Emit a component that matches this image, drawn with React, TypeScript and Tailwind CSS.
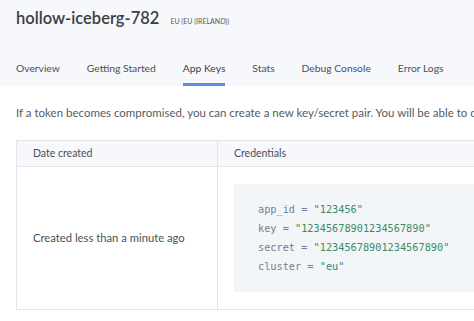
const tabs = ["Overview", "Getting Started", "App Keys", "Stats", "Debug Console", "Error Logs"]

const creds = [
  { name: "app_id", value: "123456" },
  { name: "key", value: "12345678901234567890" },
  { name: "secret", value: "12345678901234567890" },
  { name: "cluster", value: "eu" },
]

export default function App() {
  return (
    <div className="h-[321px] w-[474px] overflow-hidden bg-white font-['Lato',sans-serif] text-[#4a4f57]">
      <header className="bg-[#f6f8fb] px-4 pt-[5px]">
        <div className="flex items-baseline gap-[11px]">
          <h1 className="text-[16.5px] font-semibold leading-[26px] text-[#3b3f45]">hollow-iceberg-782</h1>
          <span className="text-[7px] uppercase text-[#555b63]">EU (EU (IRELAND))</span>
        </div>
        <nav className="mt-[27px] flex gap-[27px] whitespace-nowrap">
          {tabs.map((tab) => (
            <div
              key={tab}
              className={
                tab === "App Keys"
                  ? "shrink-0 border-b-[3px] border-[#5b8fe6] pb-[5px] text-[10.3px] leading-[20px] text-[#3b3f45]"
                  : "shrink-0 border-b-[3px] border-transparent pb-[5px] text-[10.3px] leading-[20px] text-[#4a4f57]"
              }
            >
              {tab}
            </div>
          ))}
        </nav>
      </header>

      <div className="px-4 pt-[17px]">
        <p className="whitespace-nowrap text-[11.5px] leading-[20px] text-[#555b63]">
          If a token becomes compromised, you can create a new key/secret pair. You will be able to delete the old one.
        </p>

        <div className="mt-[17px] w-[640px] border border-[#e1e5ea]">
          <div className="flex border-b border-[#e1e5ea] bg-[#f6f8fb] text-[10.5px] leading-[25px]">
            <div className="w-[201px] border-r border-[#e1e5ea] px-4">Date created</div>
            <div className="flex-1 px-4">Credentials</div>
          </div>
          <div className="flex">
            <div className="flex w-[201px] items-center border-r border-[#e1e5ea] px-4 text-[11.25px]">
              Created less than a minute ago
            </div>
            <div className="flex-1 px-4 py-[17px]">
              <pre className="bg-[#f3f6f9] px-6 py-4 font-['DejaVu_Sans_Mono',monospace] text-[10.25px] leading-[19px]">
                {creds.map((c) => (
                  <div key={c.name}>
                    <span className="text-[#6d7f98]">{c.name} = </span>
                    <span className="text-[#3b8a63]">"{c.value}"</span>
                  </div>
                ))}
              </pre>
            </div>
          </div>
        </div>
      </div>
    </div>
  )
}
